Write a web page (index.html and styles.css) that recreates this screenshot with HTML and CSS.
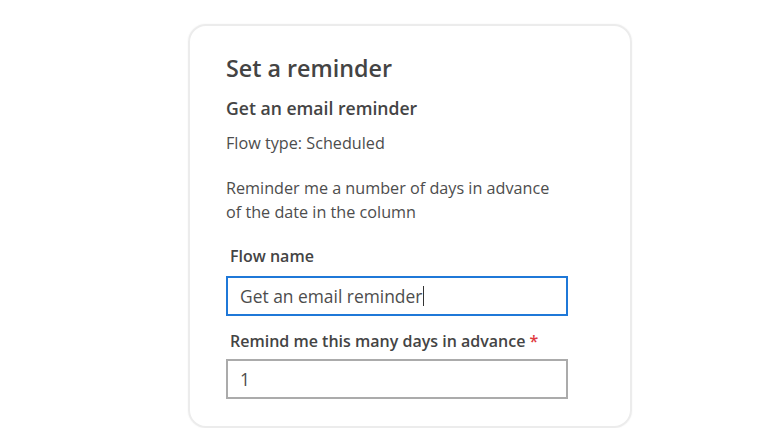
FILE: index.html
```html
<!DOCTYPE html>
<html>
<head>
<meta charset="utf-8">
<link rel="stylesheet" href="styles.css">
</head>
<body>
<div class="page">
  <div class="card">
    <h1 class="title">Set a reminder</h1>
    <h2 class="subtitle">Get an email reminder</h2>
    <p class="meta">Flow type: Scheduled</p>
    <p class="desc">Reminder me a number of days in advance<br>of the date in the column</p>
    <div class="field">
      <label class="label">Flow name</label>
      <div class="input input-focus">Get an email reminder<span class="caret"></span></div>
    </div>
    <div class="field field-second">
      <label class="label">Remind me this many days in advance <span class="req">*</span></label>
      <div class="input">1</div>
    </div>
  </div>
</div>
</body>
</html>
```

FILE: styles.css
```css
html, body {
  margin: 0;
  padding: 0;
  background: #ffffff;
}
body {
  font-family: "Open Sans", "Noto Sans", sans-serif;
  color: #444444;
}
.page {
  padding: 24px 0 0 188px;
}
.card {
  box-sizing: border-box;
  width: 444px;
  height: 404px;
  border: 2px solid #ececec;
  border-radius: 18px;
  box-shadow: 0 0 2px rgba(0,0,0,0.06);
  padding: 25px 0 0 36px;
}
.title {
  margin: 0;
  font-size: 23.3px;
  font-weight: 600;
  line-height: 34px;
  color: #444444;
}
.subtitle {
  margin: 11px 0 0;
  font-size: 17.6px;
  font-weight: 600;
  line-height: 24px;
  color: #444444;
}
.meta {
  margin: 13px 0 0;
  font-size: 16.2px;
  line-height: 20px;
  color: #4d4d4d;
}
.desc {
  margin: 23px 0 0;
  font-size: 16.2px;
  line-height: 24px;
  color: #4d4d4d;
}
.field {
  margin-top: 21px;
}
.field-second {
  margin-top: 14px;
}
.label {
  display: block;
  padding-left: 4px;
  font-size: 16px;
  font-weight: 600;
  line-height: 22px;
  color: #444444;
  margin-bottom: 9px;
}
.field-second .label {
  margin-bottom: 7px;
}
.req {
  color: #e0393e;
}
.input {
  box-sizing: border-box;
  width: 342px;
  height: 40px;
  border: 2px solid #ababab;
  padding: 0 12px;
  font-size: 17.4px;
  line-height: 36px;
  color: #4d4d4d;
  display: flex;
  align-items: center;
}
.input-focus {
  border-color: #1f78d8;
}
.caret {
  display: inline-block;
  width: 1px;
  height: 20px;
  background: #333333;
  margin-left: 1px;
}
```
